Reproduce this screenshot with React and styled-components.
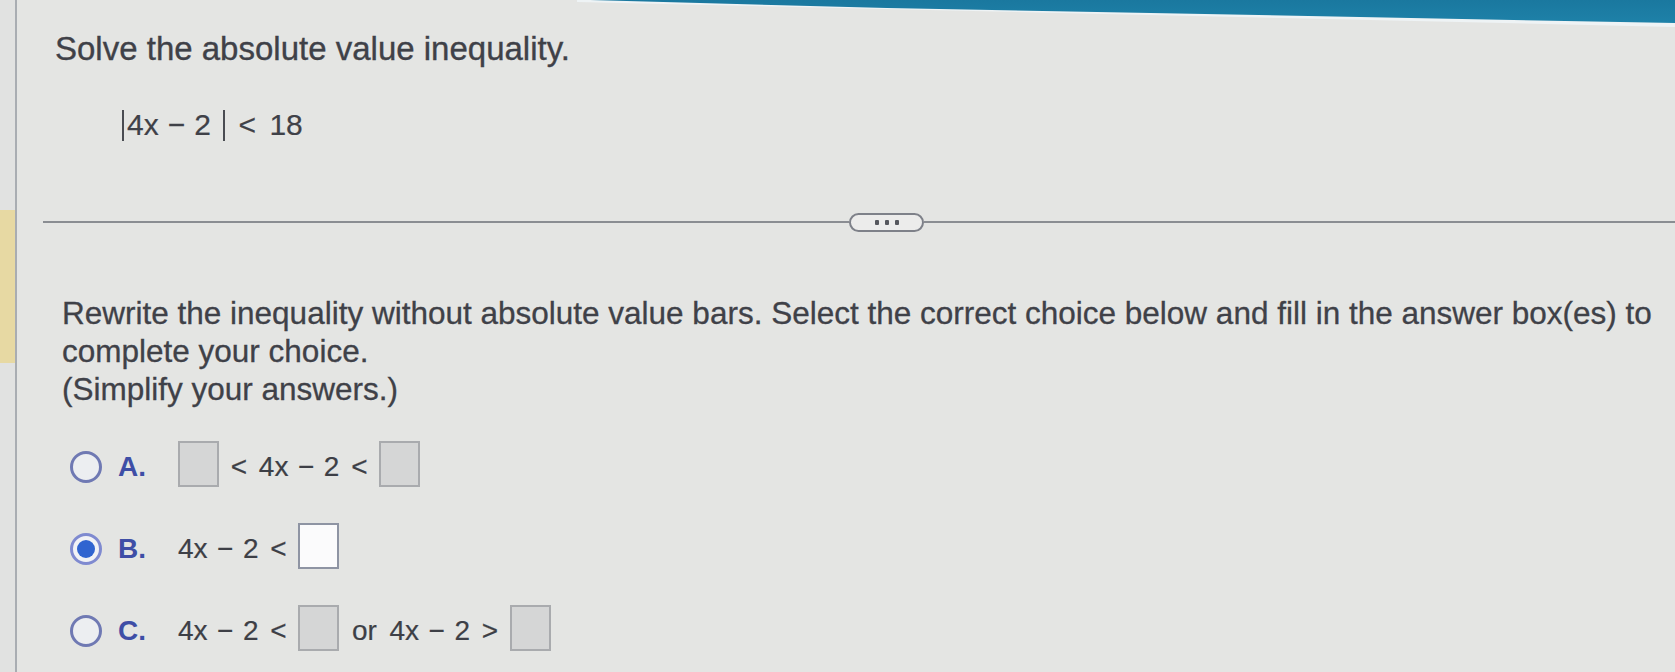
import React from 'react';
import styled, { createGlobalStyle } from 'styled-components';

const Global = createGlobalStyle`
  html, body { margin: 0; padding: 0; }
  body {
    background: #e4e5e3;
    font-family: "Liberation Sans", Arial, Helvetica, sans-serif;
    color: #3d3f46;
  }
`;

const Page = styled.div`
  display: flex;
  width: 1675px;
  height: 672px;
  overflow: hidden;
  background: #e4e5e3;
`;

const Gutter = styled.div`
  flex: none;
  width: 15px;
  display: flex;
  flex-direction: column;
  background: #e1e2e1;
  border-right: 2px solid #a9adb2;
`;

const Marker = styled.div`
  margin-top: 210px;
  height: 153px;
  background: #e7d9a3;
`;

const Main = styled.div`
  flex: 1;
  min-width: 0;
  display: flex;
  flex-direction: column;
`;

const TopStrip = styled.div`
  height: 30px;
  flex: none;
  background: #eef3f5;
  clip-path: polygon(560px 0, 100% 0, 100% 27px, 560px 2px);
  display: flex;
`;

const Teal = styled.div`
  flex: 1;
  background: linear-gradient(to bottom, #1a789f, #1f84ab);
  clip-path: polygon(573px 0, 100% 0, 100% 23px, 870px 8px);
`;

const Title = styled.h1`
  margin: 0;
  padding-left: 38px;
  font-size: 33px;
  line-height: 38px;
  font-weight: 400;
  -webkit-text-stroke: 0.35px currentColor;
  color: #3f4148;
`;

const Equation = styled.div`
  margin-top: 40px;
  padding-left: 105px;
  font-size: 30px;
  line-height: 34px;
  color: #3f4148;
  display: flex;
  align-items: baseline;
  -webkit-text-stroke: 0.2px currentColor;
`;

const Bar = styled.span`
  display: inline-block;
  width: 2px;
  height: 31px;
  background: #4a4c52;
  align-self: center;
  margin: ${p => p.$m || '0'};
`;

const Op = styled.span`
  margin: 0 ${p => p.$gap || '0.3em'};
`;

const Divider = styled.div`
  margin-top: 70px;
  margin-left: 26px;
  height: 20px;
  display: flex;
  align-items: center;
`;

const Rule = styled.div`
  height: 2px;
  background: #8a8d92;
  flex: ${p => (p.$grow ? '1' : `0 0 ${p.$w}px`)};
`;

const Pill = styled.div`
  flex: none;
  width: 75px;
  height: 19px;
  box-sizing: border-box;
  border: 2px solid #7e8189;
  border-radius: 10px;
  background: #ececeb;
  display: flex;
  align-items: center;
  justify-content: center;
  gap: 6px;
`;

const Dot = styled.span`
  width: 4px;
  height: 5px;
  border-radius: 1px;
  background: #55575d;
`;

const Prompt = styled.p`
  margin: 62px 0 0;
  padding-left: 45px;
  font-size: 31.5px;
  line-height: 38px;
  -webkit-text-stroke: 0.3px currentColor;
  color: #3f4148;
`;

const Options = styled.div`
  margin-top: 18px;
  display: flex;
  flex-direction: column;
`;

const Row = styled.div`
  height: 82px;
  display: flex;
  align-items: center;
  padding-left: 53px;
`;

const Radio = styled.span`
  flex: none;
  width: 32px;
  height: 32px;
  box-sizing: border-box;
  border-radius: 50%;
  border: 3px solid ${p => (p.$checked ? '#7f8ad0' : '#6f79b3')};
  background: ${p => (p.$checked ? '#f1f2f6' : '#eceef1')};
  display: flex;
  align-items: center;
  justify-content: center;
`;

const RadioDot = styled.span`
  width: 18px;
  height: 18px;
  border-radius: 50%;
  background: #3064d0;
`;

const Label = styled.span`
  flex: none;
  width: 60px;
  margin-left: 16px;
  font-size: 28px;
  font-weight: 700;
  color: #3e4ea6;
`;

const MathLine = styled.span`
  display: flex;
  align-items: center;
  font-size: 28px;
  color: #3d3f46;
  -webkit-text-stroke: 0.2px currentColor;
`;

const Word = styled.span`
  margin: 0 0.45em;
`;

const AnswerBox = styled.span`
  flex: none;
  display: inline-block;
  width: 41px;
  height: 46px;
  box-sizing: border-box;
  margin-top: -6px;
  border: 2px solid ${p => (p.$active ? '#8e94a3' : '#a9abae')};
  background: ${p => (p.$active ? '#fbfbfc' : '#d5d6d6')};
`;

const Rel = ({ children }) => <Op $gap="0.42em">{children}</Op>;
const Minus = () => <Op $gap="0.34em">−</Op>;

function Option({ letter, checked, children }) {
  return (
    <Row>
      <Radio $checked={checked}>{checked && <RadioDot />}</Radio>
      <Label>{letter}.</Label>
      <MathLine>{children}</MathLine>
    </Row>
  );
}

export default function App() {
  return (
    <>
      <Global />
      <Page>
        <Gutter>
          <Marker />
        </Gutter>
        <Main>
          <TopStrip>
            <Teal />
          </TopStrip>
          <Title>Solve the absolute value inequality.</Title>
          <Equation>
            <Bar $m="0 3px 0 0" />
            <span>4x</span>
            <Op $gap="0.3em">−</Op>
            <span>2</span>
            <Bar $m="0 0 0 12px" />
            <Op $gap="0.45em">&lt;</Op>
            <span>18</span>
          </Equation>
          <Divider>
            <Rule $w={806} />
            <Pill>
              <Dot />
              <Dot />
              <Dot />
            </Pill>
            <Rule $grow />
          </Divider>
          <Prompt>
            Rewrite the inequality without absolute value bars. Select the correct choice below and fill in the answer box(es) to complete your choice.
            <br />
            (Simplify your answers.)
          </Prompt>
          <Options>
            <Option letter="A">
              <AnswerBox />
              <Rel>&lt;</Rel>
              <span>4x</span>
              <Minus />
              <span>2</span>
              <Rel>&lt;</Rel>
              <AnswerBox />
            </Option>
            <Option letter="B" checked>
              <span>4x</span>
              <Minus />
              <span>2</span>
              <Rel>&lt;</Rel>
              <AnswerBox $active />
            </Option>
            <Option letter="C">
              <span>4x</span>
              <Minus />
              <span>2</span>
              <Rel>&lt;</Rel>
              <AnswerBox />
              <Word>or</Word>
              <span>4x</span>
              <Minus />
              <span>2</span>
              <Rel>&gt;</Rel>
              <AnswerBox />
            </Option>
          </Options>
        </Main>
      </Page>
    </>
  );
}
